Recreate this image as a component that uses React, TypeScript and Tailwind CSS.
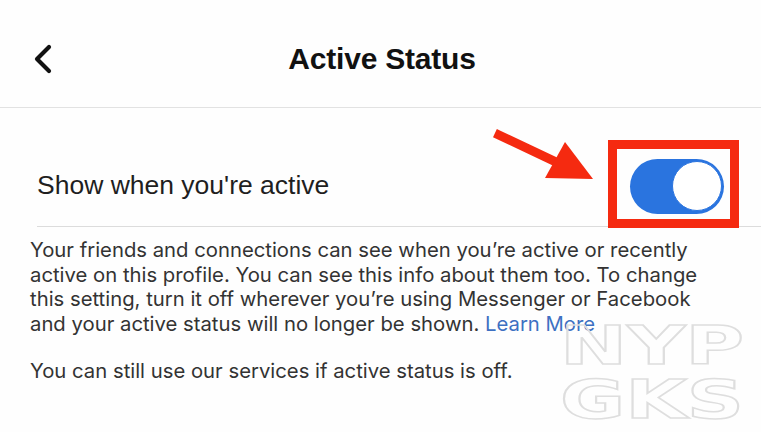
import React from "react";

const ChevronLeft = () => (
  <svg width="22" height="30" viewBox="0 0 22 30" fill="none">
    <path
      d="M17 3 L5 15 L17 27"
      stroke="#111"
      strokeWidth="4.2"
      strokeLinecap="round"
      strokeLinejoin="round"
    />
  </svg>
);

const Toggle = () => (
  <div className="relative">
    <div className="w-[94px] h-[55px] rounded-full bg-[#2a74df] flex items-center justify-end pr-[2px]">
      <div className="w-[50px] h-[50px] rounded-full bg-white border-[1.5px] border-[#2a74df]" />
    </div>
    {/* red highlight box */}
    <div className="absolute left-[-22px] top-[-19px] w-[131px] h-[88px] border-[9px] border-[#f52a10]" />
  </div>
);

const Arrow = () => (
  <svg
    className="absolute left-[490px] top-[125px]"
    width="110"
    height="60"
    viewBox="0 0 110 60"
  >
    <path d="M9 10 L68 38" stroke="#f52a10" strokeWidth="9" strokeLinecap="square" />
    <polygon points="75,17 55,53 103,54" fill="#f52a10" />
  </svg>
);

const Watermark = () => (
  <svg
    className="absolute left-[552px] top-[310px]"
    width="200"
    height="115"
    viewBox="0 0 200 115"
  >
    <g
      fill="none"
      stroke="#dedede"
      strokeWidth="1.5"
      fontFamily="'DejaVu Sans', sans-serif"
      fontWeight="bold"
      fontSize="54"
    >
      <text x="8" y="54" textLength="184" lengthAdjust="spacingAndGlyphs">
        NYP
      </text>
      <text x="8" y="108" textLength="184" lengthAdjust="spacingAndGlyphs">
        GKS
      </text>
    </g>
  </svg>
);

const App = () => {
  return (
    <div className="relative w-[761px] h-[432px] overflow-hidden bg-[#fefefe] font-['Liberation_Sans',Arial,sans-serif] text-[#1c1c1c]">
      {/* Header */}
      <div className="h-[108px] border-b border-[#e2e2e2] grid grid-cols-[1fr_auto_1fr] items-center pt-[10px]">
        <div className="pl-[32px]">
          <ChevronLeft />
        </div>
        <h1 className="text-[30px] font-semibold text-[#111] tracking-[-0.2px] pl-[3px]">
          Active Status
        </h1>
        <div />
      </div>

      {/* Toggle row */}
      <div className="ml-[37px] h-[119px] border-b border-[#dcdcdc] pt-[38px] pr-[37px] flex items-center justify-between">
        <span className="text-[26.5px] text-[#1f1f1f]">Show when you're active</span>
        <Toggle />
      </div>

      {/* Description */}
      <div className="px-[30px] pt-[11px] font-['Inter','Liberation_Sans',sans-serif] text-[20.3px] leading-[24.6px] text-[#333]">
        <p className="whitespace-nowrap">
          Your friends and connections can see when you’re active or recently
          <br />
          active on this profile. You can see this info about them too. To change
          <br />
          this setting, turn it off wherever you’re using Messenger or Facebook
          <br />
          and your active status will no longer be shown.{" "}
          <span className="text-[#3d70c2]">Learn More</span>
        </p>
        <p className="mt-[23px]">You can still use our services if active status is off.</p>
      </div>

      <Arrow />
      <Watermark />
    </div>
  );
};

export default App;
